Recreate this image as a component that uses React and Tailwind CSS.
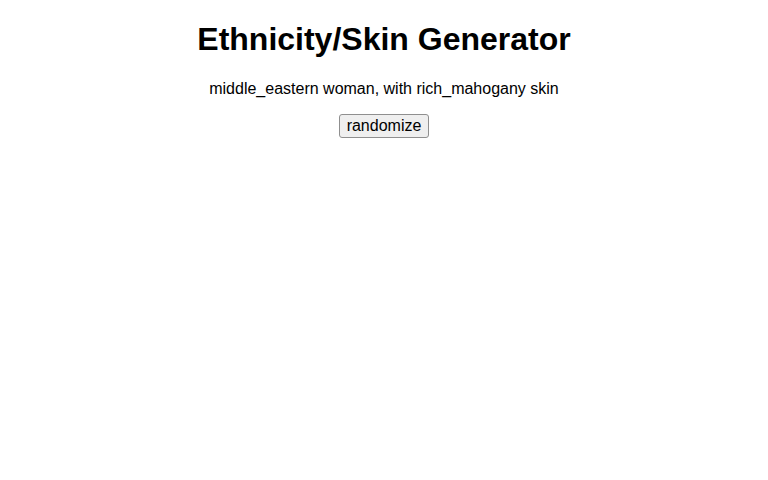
import { useState } from "react";

const ethnicities = ["middle_eastern", "east_asian", "south_asian", "african", "european", "latino"];
const genders = ["woman", "man"];
const skins = ["rich_mahogany", "porcelain", "olive", "golden_tan", "deep_ebony", "warm_beige"];

const pick = (arr) => arr[Math.floor(Math.random() * arr.length)];

export default function App() {
  const [result, setResult] = useState({
    ethnicity: "middle_eastern",
    gender: "woman",
    skin: "rich_mahogany",
  });

  const randomize = () => {
    setResult({ ethnicity: pick(ethnicities), gender: pick(genders), skin: pick(skins) });
  };

  return (
    <div className="text-center font-['Liberation_Sans',Arial,sans-serif] text-black bg-white min-h-screen">
      <h1 className="text-[32px] font-bold leading-[37px] pt-[21px] mb-[22px]">Ethnicity/Skin Generator</h1>
      <p className="text-base leading-[18px] mb-4">
        {result.ethnicity} {result.gender}, with {result.skin} skin
      </p>
      <button
        onClick={randomize}
        className="text-base leading-[18px] px-[7px] py-[2px] bg-[#efefef] border border-[#8f8f8f] rounded-[3px] hover:bg-[#e5e5e5]"
      >
        randomize
      </button>
    </div>
  );
}
